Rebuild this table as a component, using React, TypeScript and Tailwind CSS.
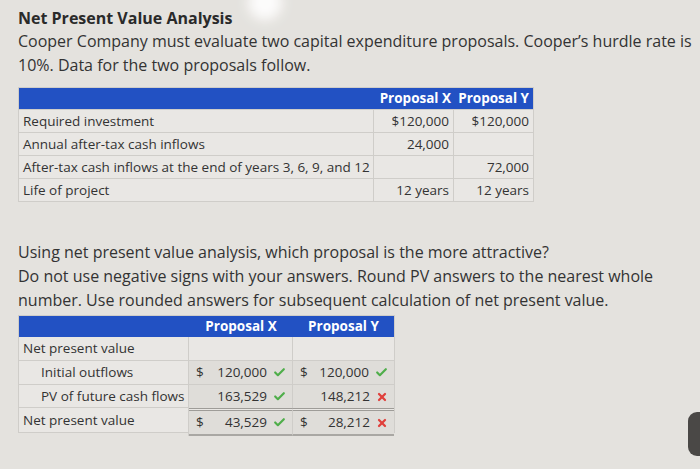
import { Check, X } from 'lucide-react';

const font = { fontFamily: '"Open Sans", "Liberation Sans", sans-serif' };

interface DataRow {
  label: string;
  x: string;
  y: string;
}

const dataRows: DataRow[] = [
  { label: 'Required investment', x: '$120,000', y: '$120,000' },
  { label: 'Annual after-tax cash inflows', x: '24,000', y: '' },
  { label: 'After-tax cash inflows at the end of years 3, 6, 9, and 12', x: '', y: '72,000' },
  { label: 'Life of project', x: '12 years', y: '12 years' },
];

function Mark({ ok }: { ok: boolean }) {
  return ok ? (
    <Check className="w-[13px] h-[13px] text-[#4fae4a]" strokeWidth={4} />
  ) : (
    <X className="w-[12px] h-[12px] text-[#e0403c]" strokeWidth={4.5} />
  );
}

function AnswerCell({ dollar, value, ok }: { dollar?: boolean; value: string; ok: boolean }) {
  return (
    <div className="flex items-center h-full bg-[#dfddd9] pl-[7px] pr-[6px]">
      <span className="w-[14px]">{dollar ? '$' : ''}</span>
      <span className="flex-1 text-right pr-[6px]">{value}</span>
      <Mark ok={ok} />
    </div>
  );
}

export default function App() {
  return (
    <div className="relative w-[700px] h-[469px] overflow-hidden bg-[#e4e2de] text-[#333333]" style={font}>
      <div className="absolute left-[248px] top-[-14px] w-[34px] h-[34px] rounded-full bg-white blur-[6px] opacity-90" />

      <div className="pl-[18px] pt-[7px]">
        <h1 className="text-[16px] font-bold leading-[22px] text-[#2a2a2a]">Net Present Value Analysis</h1>
        <p className="text-[16px] leading-[24px] w-[690px]">
          Cooper Company must evaluate two capital expenditure proposals. Cooper’s hurdle rate is 10%. Data for the two proposals follow.
        </p>

        <div className="mt-[10px] w-[516px] text-[13.5px] leading-[23px] border border-[#cfcdc9] bg-[#e9e7e4]">
          <div className="grid grid-cols-[355px_80px_1fr] bg-[#2251c3] text-white font-bold h-[21px] leading-[21px]">
            <div />
            <div className="text-right pr-[3px]">Proposal X</div>
            <div className="text-right pr-[4px]">Proposal Y</div>
          </div>
          {dataRows.map((r) => (
            <div key={r.label} className="grid grid-cols-[355px_80px_1fr] border-t border-[#cfcdc9] h-[23px]">
              <div className="pl-[4px] border-r border-[#cfcdc9]">{r.label}</div>
              <div className="text-right pr-[4px] border-r border-[#cfcdc9]">{r.x}</div>
              <div className="text-right pr-[4px]">{r.y}</div>
            </div>
          ))}
        </div>

        <p className="mt-[38px] text-[16px] leading-[24px] w-[670px]">
          Using net present value analysis, which proposal is the more attractive?
          <br />
          Do not use negative signs with your answers. Round PV answers to the nearest whole number. Use rounded answers for subsequent calculation of net present value.
        </p>

        <div className="mt-[3px] w-[377px] text-[13.5px] leading-[23px] border border-[#cfcdc9] bg-[#e9e7e4]">
          <div className="grid grid-cols-[170px_104px_1fr] bg-[#2251c3] text-white font-bold h-[21px] leading-[21px]">
            <div />
            <div className="text-center">Proposal X</div>
            <div className="text-center">Proposal Y</div>
          </div>
          <div className="grid grid-cols-[170px_104px_1fr] h-[23px]">
            <div className="pl-[4px] border-r border-[#cfcdc9]">Net present value</div>
            <div className="border-r border-[#cfcdc9]" />
            <div />
          </div>
          <div className="grid grid-cols-[170px_104px_1fr] h-[24px] border-t border-[#cfcdc9]">
            <div className="pl-[22px] border-r border-[#cfcdc9]">Initial outflows</div>
            <div className="border-r border-[#cfcdc9]">
              <AnswerCell dollar value="120,000" ok />
            </div>
            <AnswerCell dollar value="120,000" ok />
          </div>
          <div className="grid grid-cols-[170px_104px_1fr] h-[23px] border-t border-[#cfcdc9]">
            <div className="pl-[22px] border-r border-[#cfcdc9]">PV of future cash flows</div>
            <div className="border-r border-[#cfcdc9]">
              <AnswerCell value="163,529" ok />
            </div>
            <AnswerCell value="148,212" ok={false} />
          </div>
          <div className="grid grid-cols-[170px_104px_1fr] h-[25px] border-t border-[#cfcdc9]">
            <div className="pl-[4px] border-r border-[#cfcdc9] pt-[1px]">Net present value</div>
            <div className="border-r border-[#cfcdc9] border-t-[3px] border-double border-t-[#9e9c98] border-b-[2px] border-b-[#a9a7a3]">
              <AnswerCell dollar value="43,529" ok />
            </div>
            <div className="border-t-[3px] border-double border-t-[#9e9c98] border-b-[2px] border-b-[#a9a7a3]">
              <AnswerCell dollar value="28,212" ok={false} />
            </div>
          </div>
        </div>
      </div>

      <div className="absolute left-[688px] top-[412px] w-[30px] h-[44px] rounded-[9px] bg-[#4a4846]" />
    </div>
  );
}
